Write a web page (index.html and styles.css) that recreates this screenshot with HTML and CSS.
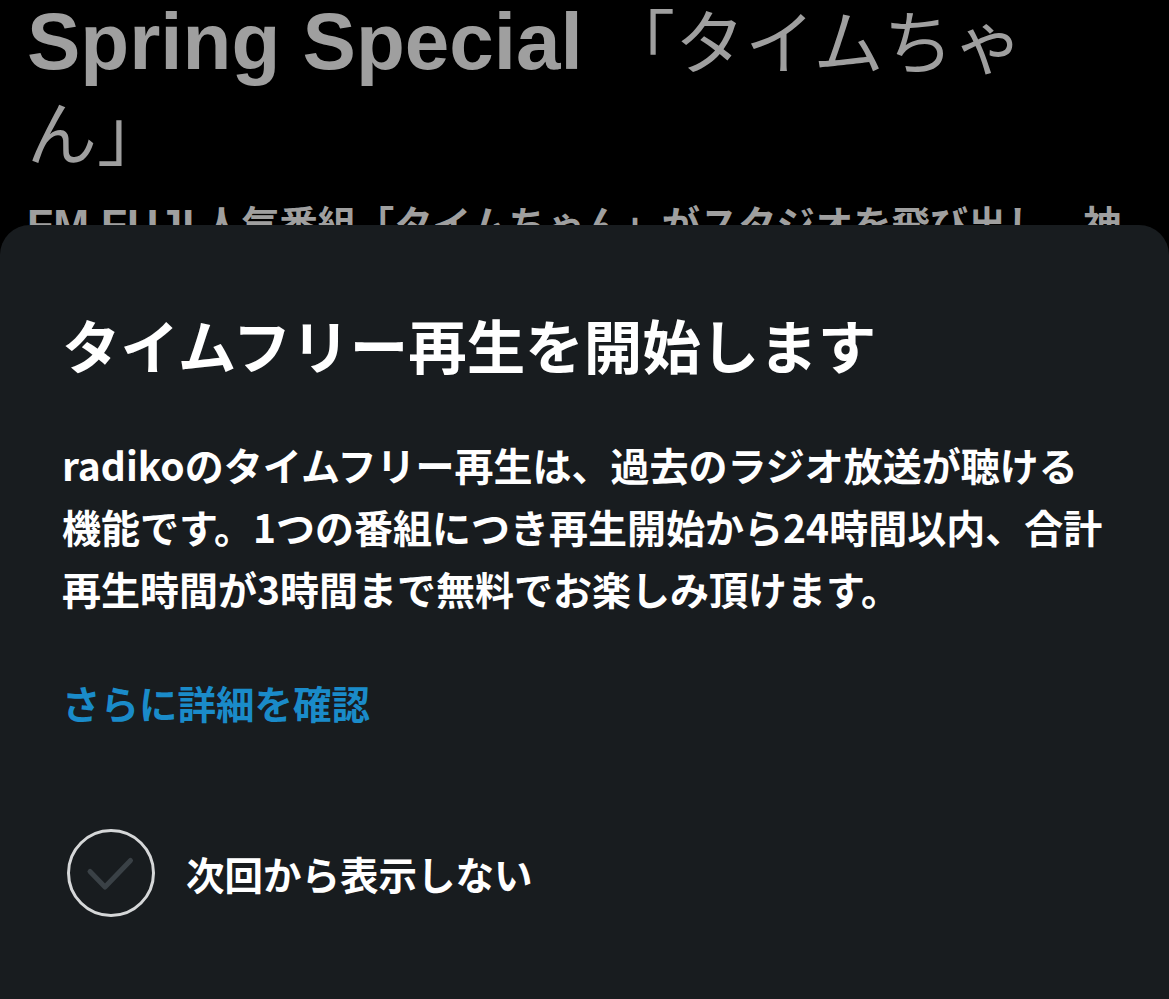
FILE: index.html
```html
<!DOCTYPE html>
<html lang="ja">
<head>
<meta charset="utf-8">
<title>タイムフリー再生</title>
<link rel="stylesheet" href="styles.css">
</head>
<body>
<main class="page">
  <header class="program">
    <h1 class="program-title">Spring Special <span class="jp">「タイムちゃん」</span></h1>
    <p class="program-desc"><span class="latin">FM FUJI</span> 人気番組「タイムちゃん」がスタジオを飛び出し、神</p>
  </header>

  <section class="sheet">
    <h2 class="sheet-title">タイムフリー再生を開始します</h2>
    <p class="sheet-text">radikoのタイムフリー再生は、過去のラジオ放送が聴ける<br>機能です。1つの番組につき再生開始から24時間以内、合計<br>再生時間が3時間まで無料でお楽しみ頂けます。</p>
    <a class="sheet-link" href="#">さらに詳細を確認</a>
    <label class="check-row">
      <svg class="check-icon" width="88" height="88" viewBox="0 0 88 88" aria-hidden="true">
        <circle cx="44" cy="44" r="42.5" fill="none" stroke="#d5d7d8" stroke-width="3"/>
        <polyline points="23,42.5 38,58 63.5,31.5" fill="none" stroke="#3a4146" stroke-width="5" stroke-linecap="round" stroke-linejoin="round"/>
      </svg>
      <span class="check-label">次回から表示しない</span>
    </label>
  </section>
</main>
</body>
</html>
```

FILE: styles.css
```css
html, body {
  margin: 0;
  padding: 0;
  background: #000;
}

.page {
  position: relative;
  width: 1169px;
  height: 999px;
  overflow: hidden;
  background: #000;
}

.program {
  padding: 0 27px;
}

.program-title {
  margin: -5px 0 0;
  max-width: 1040px;
  font-family: "Liberation Sans", "Noto Sans CJK JP", sans-serif;
  font-size: 80px;
  font-weight: 700;
  line-height: 88px;
  color: #9f9f9f;
}

.program-title .jp {
  font-family: "Noto Sans CJK JP", sans-serif;
  font-size: 70px;
  font-weight: 400;
}

.program-desc {
  margin: 18px 0 0;
  font-family: "Noto Sans CJK JP", sans-serif;
  font-size: 38.3px;
  font-weight: 700;
  line-height: 56px;
  color: #9f9f9f;
  white-space: nowrap;
}

.program-desc .latin {
  font-family: "Liberation Sans", sans-serif;
  font-size: 43px;
}

.sheet {
  position: absolute;
  top: 225px;
  left: 0;
  right: 0;
  bottom: 0;
  background: #181c1f;
  border-radius: 30px 30px 0 0;
  padding: 84px 30px 0 62px;
  display: flex;
  flex-direction: column;
  align-items: flex-start;
  font-family: "Noto Sans CJK JP", sans-serif;
  color: #fff;
}

.sheet-title {
  margin: 0;
  font-size: 58.5px;
  font-weight: 700;
  line-height: 70px;
}

.sheet-text {
  margin: 54px 0 0;
  font-size: 39px;
  font-weight: 700;
  line-height: 62px;
  white-space: nowrap;
}

.sheet-link {
  margin-top: 52px;
  font-size: 38.5px;
  font-weight: 700;
  line-height: 62px;
  color: #1a8bc9;
  text-decoration: none;
}

.check-row {
  margin-top: 96px;
  margin-left: 5px;
  display: flex;
  align-items: center;
  gap: 31px;
}

.check-icon {
  display: block;
  flex: none;
}

.check-label {
  font-size: 38.5px;
  font-weight: 700;
  line-height: 62px;
}
```
